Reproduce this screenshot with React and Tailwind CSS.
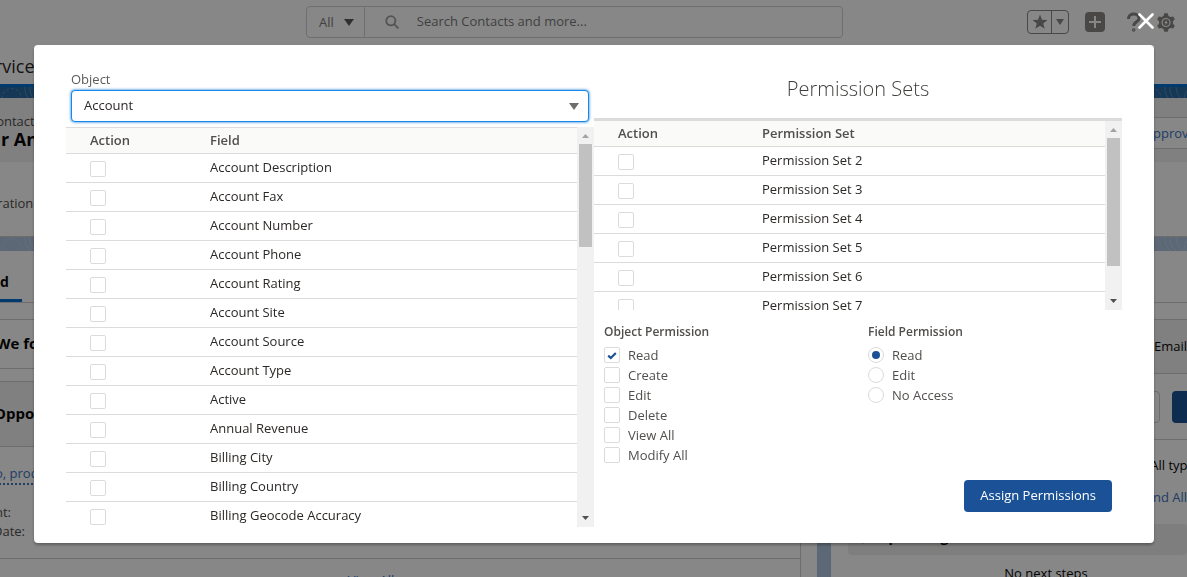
import { useState } from "react";

const FIELDS = [
  "Account Description",
  "Account Fax",
  "Account Number",
  "Account Phone",
  "Account Rating",
  "Account Site",
  "Account Source",
  "Account Type",
  "Active",
  "Annual Revenue",
  "Billing City",
  "Billing Country",
  "Billing Geocode Accuracy",
];

const PERMISSION_SETS = [2, 3, 4, 5, 6, 7].map((n) => `Permission Set ${n}`);
const OBJECT_PERMISSIONS = ["Read", "Create", "Edit", "Delete", "View All", "Modify All"];
const FIELD_PERMISSIONS = ["Read", "Edit", "No Access"];

function Checkbox(props) {
  return (
    <span className="grid size-4 shrink-0">
      <input
        type="checkbox"
        className="peer col-start-1 row-start-1 size-4 appearance-none rounded-[2px] border border-[#dddbda] bg-white"
        {...props}
      />
      <svg
        viewBox="0 0 16 16"
        className="pointer-events-none invisible col-start-1 row-start-1 size-4 peer-checked:visible"
        fill="none"
        stroke="#1b5297"
        strokeWidth="2.2"
        aria-hidden="true"
      >
        <path d="M4.2 8.6 L6.8 11 L11.8 6" />
      </svg>
    </span>
  );
}

function ScrollBar({ thumb }) {
  return (
    <div className="flex w-[17px] shrink-0 flex-col items-center bg-[#f1f1f1]" aria-hidden="true">
      <svg viewBox="0 0 17 17" className="size-[17px] shrink-0">
        <path d="M5 11h7L8.5 7z" fill="#a3a3a3" />
      </svg>
      <div className={`w-[13px] bg-[#c1c1c1] ${thumb}`} />
      <svg viewBox="0 0 17 17" className="mt-auto size-[17px] shrink-0">
        <path d="M5 6h7L8.5 10z" fill="#505050" />
      </svg>
    </div>
  );
}

function PickTable({ nameHeader, rows, nameWidth, idPrefix }) {
  return (
    <table className="w-full table-fixed border-separate border-spacing-0 text-left">
      <thead>
        <tr className="h-[26px] bg-[#fafaf9] text-[#514f4d]">
          <th className="border-b border-[#dddbda] pb-[2px] pl-6 font-semibold">Action</th>
          <th className={`border-b border-[#dddbda] pb-[2px] font-semibold ${nameWidth}`}>{nameHeader}</th>
        </tr>
      </thead>
      <tbody className="text-[#2b2826]">
        {rows.map((row, i) => (
          <tr key={row} className="h-[29px]">
            <td className="border-b border-[#dddbda] pt-[2px] pl-6">
              <Checkbox id={`${idPrefix}-${i}`} />
            </td>
            <td className="border-b border-[#dddbda] pb-[2px]">
              <label htmlFor={`${idPrefix}-${i}`}>{row}</label>
            </td>
          </tr>
        ))}
      </tbody>
    </table>
  );
}

function Contours({ id, className }) {
  return (
    <svg className={`block w-full ${className}`} aria-hidden="true">
      <defs>
        <pattern id={id} width="60" height="24" patternUnits="userSpaceOnUse">
          <g fill="none" stroke="currentColor" strokeWidth="1">
            <path d="M2 12C2 -2 22 -2 21 12" strokeDasharray="3 2" />
            <path d="M25 0q-1 8 6 14M30 0q-1 8 6 14M36 0q0 7 6 14M44 14q0-10 8-14M50 14q0-8 6-14" />
          </g>
        </pattern>
      </defs>
      <rect width="100%" height="100%" fill={`url(#${id})`} />
    </svg>
  );
}

function TopBar() {
  return (
    <header className="grid h-[50px] shrink-0 grid-cols-[306px_1fr_344px] items-start pt-[6px] text-[#7c7a78]">
      <span />
      <div className="flex h-8 items-center rounded-[4px] border border-[#d3d1d0]">
        <button type="button" className="flex h-full items-center gap-[10px] border-r border-[#d3d1d0] pr-[10px] pl-3">
          All
          <svg viewBox="0 0 10 7" className="h-[7px] w-[10px]" aria-hidden="true">
            <path d="M0 0h10L5 7z" fill="#5e5c5a" />
          </svg>
        </button>
        <svg viewBox="0 0 14 14" className="mr-[18px] ml-5 size-[14px]" fill="none" stroke="#a09e9c" strokeWidth="1.8" aria-hidden="true">
          <circle cx="5.8" cy="5.8" r="4.6" />
          <path d="M9.2 9.2L13.4 13.4" />
        </svg>
        <input
          type="search"
          aria-label="Search"
          placeholder="Search Contacts and more..."
          className="min-w-0 flex-1 bg-transparent pb-[2px] placeholder:text-[#7c7a78]"
        />
      </div>
      <div className="flex items-center justify-end pt-1 pr-3 text-[#8a8886]">
        <div className="mr-4 flex h-6 w-[42px] rounded-[4px] border border-current">
          <button type="button" aria-label="Favorites" className="flex w-[24px] items-center justify-center border-r border-current">
            <svg viewBox="0 0 16 16" className="size-4" aria-hidden="true">
              <path d="M8 .6l2 5.100 5.500.3-4.300 3.400 1.500 5.400L8 11.800l-4.700 3 1.500-5.400L.5 6 6 5.700z" fill="currentColor" />
            </svg>
          </button>
          <button type="button" aria-label="Favorites list" className="flex flex-1 items-center justify-center">
            <svg viewBox="0 0 8 6" className="h-[6px] w-2" aria-hidden="true">
              <path d="M0 0h8L4 6z" fill="currentColor" />
            </svg>
          </button>
        </div>
        <button type="button" aria-label="Global actions" className="mr-[22px]">
          <svg viewBox="0 0 20 20" className="size-5" aria-hidden="true">
            <rect width="20" height="20" rx="4" fill="currentColor" />
            <path d="M10 4v12M4 10h12" stroke="#fff" strokeWidth="2" />
          </svg>
        </button>
        <button type="button" aria-label="Help" className="mr-[16px]">
          <svg viewBox="0 0 14 20" className="h-5 w-[14px]" fill="none" stroke="currentColor" strokeWidth="3" aria-hidden="true">
            <path d="M1.500 7V6.500C1.500 0.500 12 0.500 12 6.500C12 10 6.700 9.500 6.700 14" />
            <circle cx="6.700" cy="18" r=".6" strokeWidth="2.400" />
          </svg>
        </button>
        <button type="button" aria-label="Setup">
          <svg viewBox="0 0 18 20" className="h-5 w-[18px]" aria-hidden="true">
            <g fill="currentColor">
              <circle cx="9" cy="10.500" r="7" />
              <path d="M6.200 5L7.300 1.300h3.400L11.800 5zM6.200 16l1.100 3.700h3.400l1.100-3.700z" />
              <path d="M6.200 5L7.300 1.300h3.400L11.800 5zM6.200 16l1.100 3.700h3.400l1.100-3.700z" transform="rotate(60 9 10.500)" />
              <path d="M6.200 5L7.300 1.300h3.400L11.800 5zM6.200 16l1.100 3.700h3.400l1.100-3.700z" transform="rotate(120 9 10.500)" />
            </g>
            <circle cx="9" cy="10.500" r="4" fill="none" stroke="#fff" strokeWidth="1.200" />
            <path d="M9.800 7.800L7.200 11h1.500l-.4 2.300 2.500-3.200H9.300z" fill="#fff" />
          </svg>
        </button>
      </div>
    </header>
  );
}

function RecordPage() {
  return (
    <div className="flex h-screen flex-col overflow-hidden bg-white">
      <TopBar />
      <nav className="-ml-[25px] flex h-[34px] shrink-0 items-center pb-[2px] text-[18px] text-[#2b2826]">Service</nav>
      <div className="h-[3px] shrink-0 bg-[#0070d2]" />
      <Contours id="band-dark" className="h-[11px] shrink-0 bg-[#2a6aa5] text-[#5688b8]" />

      <section className="shrink-0 border-b border-[#d0cecc] bg-white">
        <div className="flex h-16 items-start justify-between bg-[#f3f2f2]">
          <div className="-ml-3 pt-[14px]">
            <p className="leading-[18px] text-[#514f4d]">Contact</p>
            <h1 className="-ml-1 text-[18px] leading-[18px] font-bold text-[#080707]">Mr Andy</h1>
          </div>
          <button type="button" className="-mr-12 mt-[19px] h-8 w-[120px] border border-[#d0cecc] bg-white text-[#3b74bf]">
            Approvals
          </button>
        </div>
        <p className="-ml-10 h-[74px] pt-8 leading-[18px] text-[#514f4d]">Corporation</p>
      </section>
      <Contours id="band-light" className="h-[14px] shrink-0 bg-[#b0c4df] text-[#c0d0e6]" />

      <div className="flex min-h-0 flex-1 gap-[14px] bg-[#b0c4df]">
        <div className="w-[817px] shrink-0 bg-white">
          <div className="flex h-[52px] items-end border-b border-[#d0cecc]">
            <span className="h-[34px] w-[22px] border-b-[3px] border-[#0070d2] text-[14px] leading-[28px] font-bold text-[#080707]">d</span>
          </div>
          <div className="mt-4 flex h-[50px] items-center border-y border-[#d0cecc] pb-[2px] text-[15px] font-bold text-[#080707]">
            <span className="-ml-1">We found</span>
          </div>
          <div className="mt-3 mr-4 h-[400px] border-t border-r border-[#d0cecc]">
            <h2 className="flex h-[65px] items-center border-b border-[#d0cecc] bg-[#f3f2f2] pb-[2px] text-[15px] font-bold text-[#080707]">
              <span className="-ml-[6px]">Opportunities</span>
            </h2>
            <a href="#product" className="mt-4 -ml-[5px] inline-block border-b-2 border-dotted border-[#3b74bf] text-[#3b74bf]">
              o, product
            </a>
            <p className="mt-[18px] -ml-[5px] leading-[19px] text-[#514f4d]">nt:</p>
            <p className="-ml-[7px] h-9 leading-[19px] text-[#514f4d]">Date:</p>
            <p className="border-t border-[#d0cecc] pt-[11px] pr-[58px] text-center text-[#3b74bf]">
              <a href="#all">View All</a>
            </p>
          </div>
        </div>

        <div className="min-w-0 flex-1 bg-white pl-[17px]">
          <div className="h-[52px] border-b border-[#d0cecc]" />
          <div className="mt-4 flex h-[55px] items-center justify-end border-y border-[#d0cecc] bg-[#f3f2f2] pb-[2px] text-[#080707]">Email</div>
          <div className="flex h-[66px] items-center gap-3 border-b border-[#d0cecc]">
            <input type="text" aria-label="Log a call" className="h-8 min-w-0 flex-1 rounded-[4px] border border-[#d0cecc]" />
            <button type="button" aria-label="Add" className="-mr-1 h-8 w-[19px] rounded-l-[4px] bg-[#1b5297]" />
          </div>
          <p className="-mr-[14px] pt-[15px] text-right leading-5 text-[#080707]">All types</p>
          <p className="pt-3 text-right leading-5 text-[#3b74bf]">
            <a href="#expand">Expand All</a>
          </p>
          <h2 className="mt-[17px] flex h-[31px] items-start gap-[10px] rounded-[4px] bg-[#f0efee] pl-[10px] text-[14px] leading-[26px] font-bold text-[#080707]">
            <svg viewBox="0 0 10 6" className="mt-[14px] h-[6px] w-[10px]" aria-hidden="true">
              <path d="M0 0h10L5 6z" fill="#a09e9c" />
            </svg>
            Upcoming
          </h2>
          <p className="pt-2 pl-[57px] text-center leading-5 text-[#080707]">No next steps</p>
        </div>
      </div>
    </div>
  );
}

export default function App() {
  const [objectPerms, setObjectPerms] = useState(["Read"]);
  const [fieldPerm, setFieldPerm] = useState("Read");

  const toggle = (name) =>
    setObjectPerms((list) => (list.includes(name) ? list.filter((n) => n !== name) : [...list, name]));

  return (
    <div className="font-['Open_Sans','Noto_Sans',sans-serif] text-[13px] leading-5">
      <RecordPage />

      <div className="fixed inset-0 overflow-hidden bg-black/47 pt-[45px] pr-[33px] pl-[34px]">
        <div role="dialog" aria-label="Assign permissions" className="relative rounded-[4px] bg-white px-8 pb-4 shadow-[0_2px_3px_rgba(0,0,0,0.3)]">
          <button type="button" aria-label="Close" className="absolute -top-8 right-0">
            <svg viewBox="0 0 16 16" className="size-4" stroke="#fff" strokeWidth="2.600" strokeLinecap="round" aria-hidden="true">
              <path d="M1.500 1.500L14.500 14.500M14.500 1.500L1.500 14.500" />
            </svg>
          </button>

          <div className="grid grid-cols-2">
            <section>
              <div className="px-[5px] pt-6">
                <label htmlFor="object" className="block h-[21px] text-[#5e5c5a]">
                  Object
                </label>
                <div className="grid items-center">
                  <select
                    id="object"
                    defaultValue="Account"
                    className="col-start-1 row-start-1 h-8 w-full appearance-none rounded-[4px] border border-[#1589ee] bg-white pr-8 pb-[2px] pl-3 text-[#2b2826] shadow-[0_0_3px_#0070d2] outline-none"
                  >
                    <option>Account</option>
                    <option>Contact</option>
                  </select>
                  <svg viewBox="0 0 10 7" className="pointer-events-none col-start-1 row-start-1 mr-[10px] h-[7px] w-[10px] justify-self-end" aria-hidden="true">
                    <path d="M0 0h10L5 7z" fill="#706e6b" />
                  </svg>
                </div>
              </div>
              <div className="mt-[5px] flex h-[400px]">
                <div className="flex-1 overflow-y-auto border-t border-[#dddbda] [scrollbar-width:none]">
                  <PickTable nameHeader="Field" rows={FIELDS} nameWidth="w-[367px]" idPrefix="field" />
                </div>
                <ScrollBar thumb="h-[103px]" />
              </div>
            </section>

            <section className="flex flex-col">
              <h2 className="flex h-[73px] items-center justify-center pt-[15px] text-[20px] font-light text-[#3e3e3c]">
                Permission Sets
              </h2>
              <div className="flex h-[192px] border-t-[3px] border-[#dddbda]">
                <div className="flex-1 overflow-y-auto [scrollbar-width:none]">
                  <PickTable nameHeader="Permission Set" rows={PERMISSION_SETS} nameWidth="w-[343px]" idPrefix="set" />
                </div>
                <ScrollBar thumb="h-[128px]" />
              </div>

              <div className="grid grid-cols-2 pt-3 text-[#514f4d]">
                <fieldset className="px-[10px]">
                  <legend className="pb-[3px] text-[12px] leading-5 font-semibold">Object Permission</legend>
                  {OBJECT_PERMISSIONS.map((name) => (
                    <label key={name} className="flex h-5 items-center gap-2">
                      <Checkbox checked={objectPerms.includes(name)} onChange={() => toggle(name)} />
                      {name}
                    </label>
                  ))}
                </fieldset>
                <fieldset className="px-[10px]">
                  <legend className="pb-[3px] text-[12px] leading-5 font-semibold">Field Permission</legend>
                  {FIELD_PERMISSIONS.map((name) => (
                    <label key={name} className="flex h-5 items-center gap-2">
                      <input
                        type="radio"
                        name="field-permission"
                        checked={fieldPerm === name}
                        onChange={() => setFieldPerm(name)}
                        className="size-4 appearance-none rounded-full border border-[#dddbda] bg-white bg-clip-content p-[3px] checked:bg-[#1b5297]"
                      />
                      {name}
                    </label>
                  ))}
                </fieldset>
              </div>

              <button type="button" className="mt-[15px] mr-[10px] h-8 self-end rounded-[4px] bg-[#1b5297] px-4 pb-[2px] font-medium text-white">
                Assign Permissions
              </button>
            </section>
          </div>
        </div>
      </div>
    </div>
  );
}
